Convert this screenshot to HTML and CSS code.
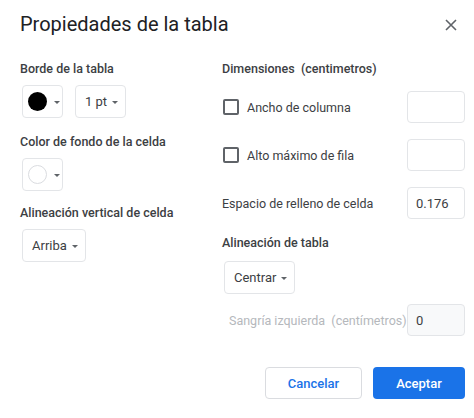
FILE: index.html
```html
<!DOCTYPE html>
<html lang="es">
<head>
<meta charset="utf-8">
<link rel="stylesheet" href="styles.css">
</head>
<body>
<div class="dialog">
  <div class="header">
    <div class="title">Propiedades de la tabla</div>
    <div class="close"><svg width="12" height="12" viewBox="0 0 12 12"><path d="M1 1L11 11M11 1L1 11" stroke="#5f6368" stroke-width="1.6"/></svg></div>
  </div>
  <div class="cols">
    <div class="col left">
      <div class="label">Borde de la tabla</div>
      <div class="btnrow">
        <div class="btn swatch"><span class="dot black"></span><span class="arrow"></span></div>
        <div class="btn text">1 pt<span class="arrow"></span></div>
      </div>
      <div class="label l2">Color de fondo de la celda</div>
      <div class="btnrow">
        <div class="btn swatch"><span class="dot white"></span><span class="arrow"></span></div>
      </div>
      <div class="label l3">Alineación vertical de celda</div>
      <div class="btnrow">
        <div class="btn text">Arriba<span class="arrow"></span></div>
      </div>
    </div>
    <div class="col right">
      <div class="label">Dimensiones&nbsp; (centimetros)</div>
      <div class="row r1">
        <span class="check"></span><span class="rtext">Ancho de columna</span>
        <div class="input"></div>
      </div>
      <div class="row">
        <span class="check"></span><span class="rtext">Alto máximo de fila</span>
        <div class="input"></div>
      </div>
      <div class="row">
        <span class="rtext nocheck">Espacio de relleno de celda</span>
        <div class="input">0.176</div>
      </div>
      <div class="label l4">Alineación de tabla</div>
      <div class="btnrow">
        <div class="btn text">Centrar<span class="arrow"></span></div>
      </div>
      <div class="row r6">
        <span class="rtext disabled">Sangría izquierda&nbsp; (centímetros)</span>
        <div class="input dis">0</div>
      </div>
    </div>
  </div>
  <div class="footer">
    <div class="fbtn cancel">Cancelar</div>
    <div class="fbtn ok">Aceptar</div>
  </div>
</div>
</body>
</html>
```
FILE: styles.css
```css
html, body {
  margin: 0;
  padding: 0;
  background: #ffffff;
}
body {
  font-family: Roboto, "Liberation Sans", Arial, sans-serif;
  color: #3c4043;
  width: 474px;
  height: 418px;
  overflow: hidden;
}
.dialog {
  padding: 0 9px 0 20px;
}
.header {
  display: flex;
  align-items: center;
  justify-content: space-between;
  height: 50px;
}
.title {
  font-size: 20px;
  color: #202124;
  padding-bottom: 3px;
}
.close {
  width: 12px;
  height: 12px;
  margin-right: 8px;
  margin-bottom: 1px;
}
.close svg { display: block; }
.cols {
  display: grid;
  grid-template-columns: 202px 243px;
}
.label {
  font-size: 12.5px;
  font-weight: 500;
  line-height: 16px;
  height: 16px;
  color: #3c4043;
  margin-top: 11px;
  margin-bottom: 8px;
}
.left .l2 { margin-top: 16px; margin-bottom: 8px; }
.left .l3 { margin-top: 14px; margin-bottom: 8px; }
.btnrow {
  display: flex;
  gap: 12px;
  margin-left: 2px;
}
.btn {
  box-sizing: border-box;
  height: 33px;
  border: 1px solid #e3e5e8;
  border-radius: 4px;
  display: flex;
  align-items: center;
  font-size: 13px;
  color: #3c4043;
}
.btn.swatch {
  width: 41px;
  padding-left: 5px;
}
.btn.text {
  padding: 0 7px 0 9px;
}
.dot {
  width: 19px;
  height: 19px;
  border-radius: 50%;
  box-sizing: border-box;
  margin-right: 7px;
}
.dot.black { background: #000000; }
.dot.white { background: #ffffff; border: 1px solid #dadce0; }
.arrow {
  width: 0;
  height: 0;
  border-left: 3.5px solid transparent;
  border-right: 3.5px solid transparent;
  border-top: 3.5px solid #5f6368;
  margin-left: 5px;
  margin-top: 1px;
}
.btn.swatch .arrow { margin-left: 0; }
.right .btnrow { margin-left: 2px; }
.row {
  display: flex;
  align-items: center;
  height: 32px;
  margin-bottom: 16px;
  font-size: 12.5px;
}
.row.r1 { margin-top: 14px; }
.check {
  box-sizing: border-box;
  width: 16px;
  height: 16px;
  border: 2px solid #5f6368;
  border-radius: 2px;
  margin-left: 1px;
  margin-right: 8px;
  flex-shrink: 0;
}
.rtext {
  flex: 1;
  color: #3c4043;
}
.rtext.disabled {
  color: #b5b8bc;
  flex: none;
  margin-left: 7px;
}
.input {
  box-sizing: border-box;
  width: 58px;
  flex-shrink: 0;
  height: 32px;
  border: 1px solid #e3e5e8;
  border-radius: 4px;
  display: flex;
  align-items: center;
  padding-left: 8px;
  font-size: 13px;
  color: #3c4043;
}
.row.r6 .input { margin-left: auto; }
.input.dis { background: #f8f9fa; color: #3c4043; }
.right .l4 { margin-top: 9px; margin-bottom: 10px; }
.row.r6 { margin-top: 10px; }
.footer {
  display: flex;
  justify-content: flex-end;
  gap: 11px;
  margin-top: 15px;
}
.fbtn {
  box-sizing: border-box;
  height: 32px;
  border-radius: 4px;
  display: flex;
  align-items: center;
  justify-content: center;
  font-size: 13px;
  font-weight: 500;
}
.fbtn.cancel {
  width: 97px;
  border: 1px solid #dadce0;
  color: #1a73e8;
}
.fbtn.ok {
  width: 92px;
  background: #1a73e8;
  color: #ffffff;
}
```
